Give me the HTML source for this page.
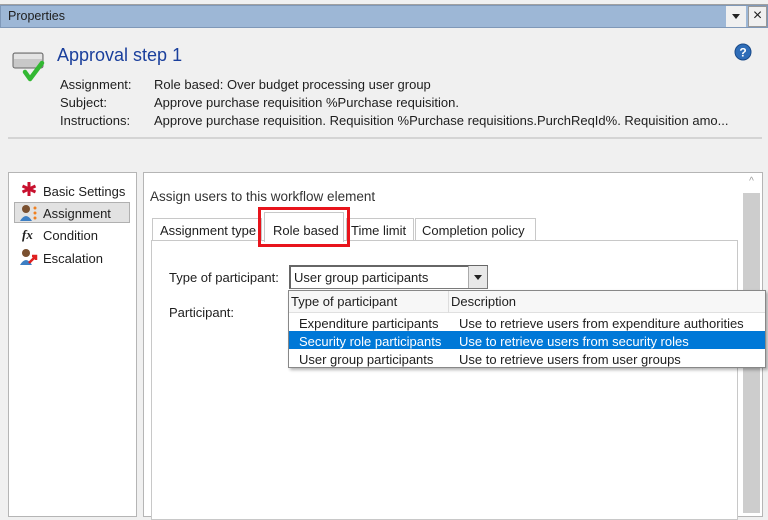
<!DOCTYPE html>
<html><head><style>
*{margin:0;padding:0;box-sizing:border-box}
body{width:768px;height:512px;overflow:hidden;background:#f0f0f0;font-family:"Liberation Sans",sans-serif;font-size:13px;color:#1e1e1e;position:relative}
.a{position:absolute;white-space:nowrap}
</style></head><body>
<div class="a" style="left:0;top:4px;width:768px;height:1px;background:#a0a0a0"></div>
<div class="a" style="left:0;top:5px;width:768px;height:23px;background:#9db7d6;border:1px solid #7f98b8"></div>
<div class="a" style="left:8px;top:9px;font-size:12.5px">Properties</div>
<div class="a" style="left:726px;top:6px;width:20px;height:21px;background:#f0f0f0"></div>
<div class="a" style="left:732px;top:14px;width:0;height:0;border-left:4px solid transparent;border-right:4px solid transparent;border-top:5px solid #222"></div>
<div class="a" style="left:748px;top:6px;width:19px;height:21px;background:#f0f0f0;border:1px solid #999;text-align:center;font-size:16px;line-height:18px">×</div>

<svg class="a" style="left:10px;top:50px" width="36" height="36">
<rect x="3" y="3" width="30" height="15" rx="2" fill="#c8c8c8" stroke="#666"/>
<rect x="4" y="4" width="28" height="5" fill="#e4e4e4"/>
<path d="M15 22 L20 29 L32 13" stroke="#33b833" stroke-width="4.5" fill="none" stroke-linecap="round" stroke-linejoin="round"/>
</svg>
<div class="a" style="left:57px;top:45px;font-size:18px;color:#1a3f9c">Approval step 1</div>
<svg class="a" style="left:734px;top:43px" width="18" height="18"><circle cx="9" cy="9" r="8" fill="#2e6db8" stroke="#1a4a88"/><text x="9" y="13.5" text-anchor="middle" fill="#fff" font-size="12" font-weight="bold" font-family="Liberation Sans">?</text></svg>
<div class="a" style="left:60px;top:76px;line-height:18px">Assignment:<br>Subject:<br>Instructions:</div>
<div class="a" style="left:154px;top:76px;line-height:18px">Role based: Over budget processing user group<br>Approve purchase requisition %Purchase requisition.<br>Approve purchase requisition. Requisition %Purchase requisitions.PurchReqId%. Requisition amo...</div>
<div class="a" style="left:8px;top:137px;width:754px;height:2px;background:#d4d4d4"></div>

<div class="a" style="left:8px;top:172px;width:129px;height:345px;background:#fff;border:1px solid #b5b5b5"></div>
<svg class="a" style="left:21px;top:181px" width="16" height="16"><path d="M8 1V15M1.5 5L14.5 11M1.5 11L14.5 5" stroke="#c8102e" stroke-width="3"/></svg>
<div class="a" style="left:43px;top:184px">Basic Settings</div>
<div class="a" style="left:14px;top:202px;width:116px;height:21px;background:#e2e2e2;border:1px solid #b0b0b0"></div>
<svg class="a" style="left:18px;top:203px" width="20" height="20"><circle cx="8" cy="6" r="4" fill="#7a5030"/><path d="M2 18 Q8 8 14 18Z" fill="#3d7fc4"/><circle cx="17" cy="5" r="1.5" fill="#f08020"/><circle cx="17" cy="10" r="1.5" fill="#f08020"/><circle cx="17" cy="15" r="1.5" fill="#f08020"/></svg>
<div class="a" style="left:43px;top:206px">Assignment</div>
<div class="a" style="left:22px;top:227px;font-family:'Liberation Serif',serif;font-style:italic;font-weight:bold;font-size:13px">fx</div>
<div class="a" style="left:43px;top:228px">Condition</div>
<svg class="a" style="left:18px;top:247px" width="20" height="20"><circle cx="8" cy="6" r="4" fill="#7a5030"/><path d="M2 18 Q8 8 14 18Z" fill="#3d7fc4"/><path d="M11 16 L18 9 M14 9 H18 V13" stroke="#e02020" stroke-width="2.5" fill="none"/></svg>
<div class="a" style="left:43px;top:251px">Escalation</div>

<div class="a" style="left:143px;top:172px;width:620px;height:345px;background:#fff;border:1px solid #b5b5b5"></div>
<div class="a" style="left:743px;top:176px;width:17px;height:16px;color:#999;font-size:10px;text-align:center">^</div>
<div class="a" style="left:743px;top:193px;width:17px;height:320px;background:#cdcdcd"></div>
<div class="a" style="left:150px;top:189px;font-size:13.5px;color:#333">Assign users to this workflow element</div>
<div class="a" style="left:151px;top:240px;width:587px;height:280px;border:1px solid #c8c8c8;background:#fff"></div>
<div class="a" style="left:152px;top:218px;width:110px;height:23px;border:1px solid #c8c8c8;border-bottom:none;padding:4px 0 0 7px;overflow:hidden">Assignment type</div>
<div class="a" style="left:264px;top:212px;width:80px;height:30px;border:1px solid #c8c8c8;border-bottom:none;background:#fff;padding:10px 0 0 8px">Role based</div>
<div class="a" style="left:346px;top:218px;width:68px;height:23px;border:1px solid #c8c8c8;border-bottom:none;padding:4px 0 0 4px">Time limit</div>
<div class="a" style="left:415px;top:218px;width:121px;height:23px;border:1px solid #c8c8c8;border-bottom:none;padding:4px 0 0 6px">Completion policy</div>
<div class="a" style="left:258px;top:207px;width:92px;height:40px;border:3px solid #e8141c"></div>

<div class="a" style="left:169px;top:270px">Type of participant:</div>
<div class="a" style="left:169px;top:305px">Participant:</div>
<div class="a" style="left:289px;top:265px;width:199px;height:24px;border:1px solid #7a7a7a;border-top:2px solid #666;border-left:2px solid #666;background:#fff;padding:3px 0 0 3px">User group participants</div>
<div class="a" style="left:468px;top:266px;width:19px;height:22px;background:#e8e8e8;border-left:1px solid #aaa"></div>
<div class="a" style="left:474px;top:275px;width:0;height:0;border-left:4px solid transparent;border-right:4px solid transparent;border-top:5px solid #222"></div>

<div class="a" style="left:288px;top:290px;width:478px;height:78px;background:#fff;border:1px solid #888;box-shadow:2px 2px 3px rgba(0,0,0,.3)"></div>
<div class="a" style="left:289px;top:291px;width:476px;height:22px;background:#f7f7f7;border-bottom:1px solid #e0e0e0"></div>
<div class="a" style="left:448px;top:291px;width:1px;height:22px;background:#ddd"></div>
<div class="a" style="left:291px;top:294px">Type of participant</div>
<div class="a" style="left:451px;top:294px">Description</div>
<div class="a" style="left:289px;top:331px;width:476px;height:18px;background:#0078d7"></div>
<div class="a" style="left:299px;top:315px;line-height:18px">Expenditure participants<br><span style="color:#fff">Security role participants</span><br>User group participants</div>
<div class="a" style="left:459px;top:315px;line-height:18px">Use to retrieve users from expenditure authorities<br><span style="color:#fff">Use to retrieve users from security roles</span><br>Use to retrieve users from user groups</div>
</body></html>
